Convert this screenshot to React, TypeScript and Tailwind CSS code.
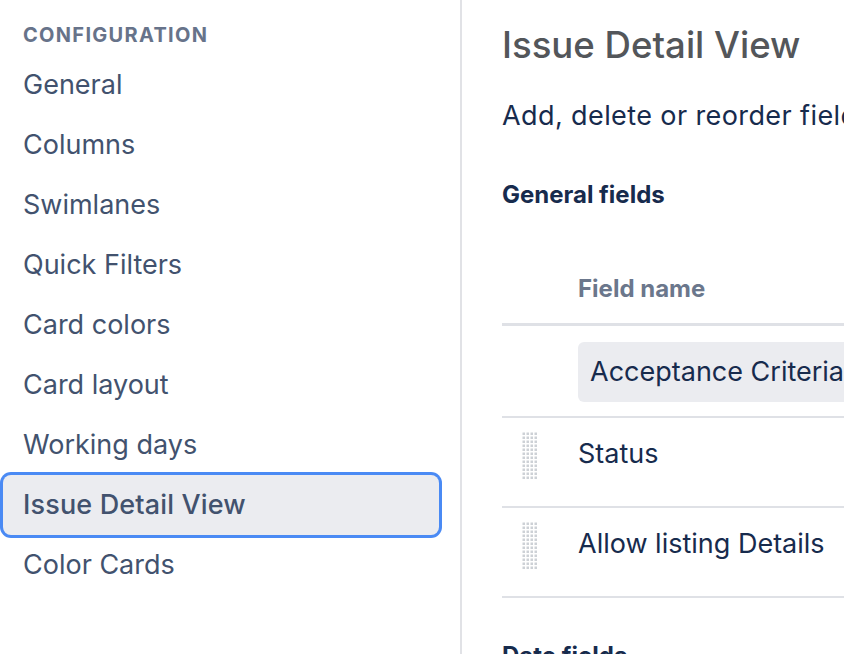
import React from "react";

const items = [
  "General",
  "Columns",
  "Swimlanes",
  "Quick Filters",
  "Card colors",
  "Card layout",
  "Working days",
  "Issue Detail View",
  "Color Cards",
];

function Handle() {
  const dots: React.ReactNode[] = [];
  for (let r = 0; r < 12; r++) {
    for (let c = 0; c < 4; c++) {
      dots.push(
        <rect key={`${r}-${c}`} x={c * 4 + 0.5} y={r * 4 + 0.5} width={2.5} height={2.5} fill="#cdd1d6" />
      );
    }
  }
  return (
    <svg width="16" height="47" viewBox="0 0 16 47" className="block">
      {dots}
    </svg>
  );
}

export default function App() {
  return (
    <div
      className="flex w-[844px] h-[654px] overflow-hidden bg-white"
      style={{ fontFamily: "Inter, 'Noto Sans', sans-serif" }}
    >
      <aside className="w-[462px] shrink-0 border-r-2 border-[#e1e2e6] pl-[3px] pr-[21px]">
        <div className="mt-[23px] mb-[8px] h-[24px] px-[20px] text-[20px] leading-[24px] font-bold tracking-[1.3px] text-[#67738a] uppercase">
          Configuration
        </div>
        <nav className="flex flex-col">
          {items.map((label) => {
            const active = label === "Issue Detail View";
            return (
              <div
                key={label}
                className={
                  active
                    ? "h-[60px] flex items-center px-[20px] rounded-[8px] bg-[#ebecf0] ring-[3px] ring-[#4a8af4] text-[27px] font-medium tracking-[0.15px] text-[#42526e]"
                    : "h-[60px] flex items-center px-[20px] rounded-[8px] text-[27px] text-[#42526e]"
                }
              >
                {label}
              </div>
            );
          })}
        </nav>
      </aside>
      <main className="flex-1 min-w-0 pl-[40px]">
        <div className="w-[700px]">
          <h1 className="mt-[21px] h-[48px] text-[36.6px] leading-[48px] font-medium text-[#53565a] whitespace-nowrap">
            Issue Detail View
          </h1>
          <p className="mt-[29px] h-[36px] text-[27px] leading-[36px] tracking-[0.4px] text-[#172b4d] whitespace-nowrap">
            Add, delete or reorder fields to customize the issue detail view.
          </p>
          <h2 className="mt-[46px] h-[30px] text-[24px] leading-[30px] font-bold text-[#172b4d]">
            General fields
          </h2>
          <div className="mt-[59px] pb-[14px] border-b-[3px] border-[#dfe1e6] flex">
            <div className="w-[76px] shrink-0" />
            <div className="text-[24px] leading-[40px] font-bold text-[#6b778c]">Field name</div>
          </div>
          <div className="flex pt-[16px] pb-[14px] border-b-2 border-[#dfe1e6]">
            <div className="w-[76px] shrink-0" />
            <div className="flex-1 h-[60px] rounded-[6px] bg-[#ebecf0] px-[12px] flex items-center text-[27px] text-[#172b4d] whitespace-nowrap">
              Acceptance Criteria
            </div>
          </div>
          {["Status", "Allow listing Details"].map((f) => (
            <div key={f} className="flex items-start h-[90px] border-b-2 border-[#dfe1e6]">
              <div className="w-[76px] shrink-0 pt-[14px] pl-[20px]">
                <Handle />
              </div>
              <div className="pt-[16px] text-[27px] leading-[40px] text-[#172b4d] whitespace-nowrap">{f}</div>
            </div>
          ))}
          <h2 className="mt-[43px] h-[30px] text-[24px] leading-[30px] font-bold text-[#172b4d]">
            Date fields
          </h2>
        </div>
      </main>
    </div>
  );
}
